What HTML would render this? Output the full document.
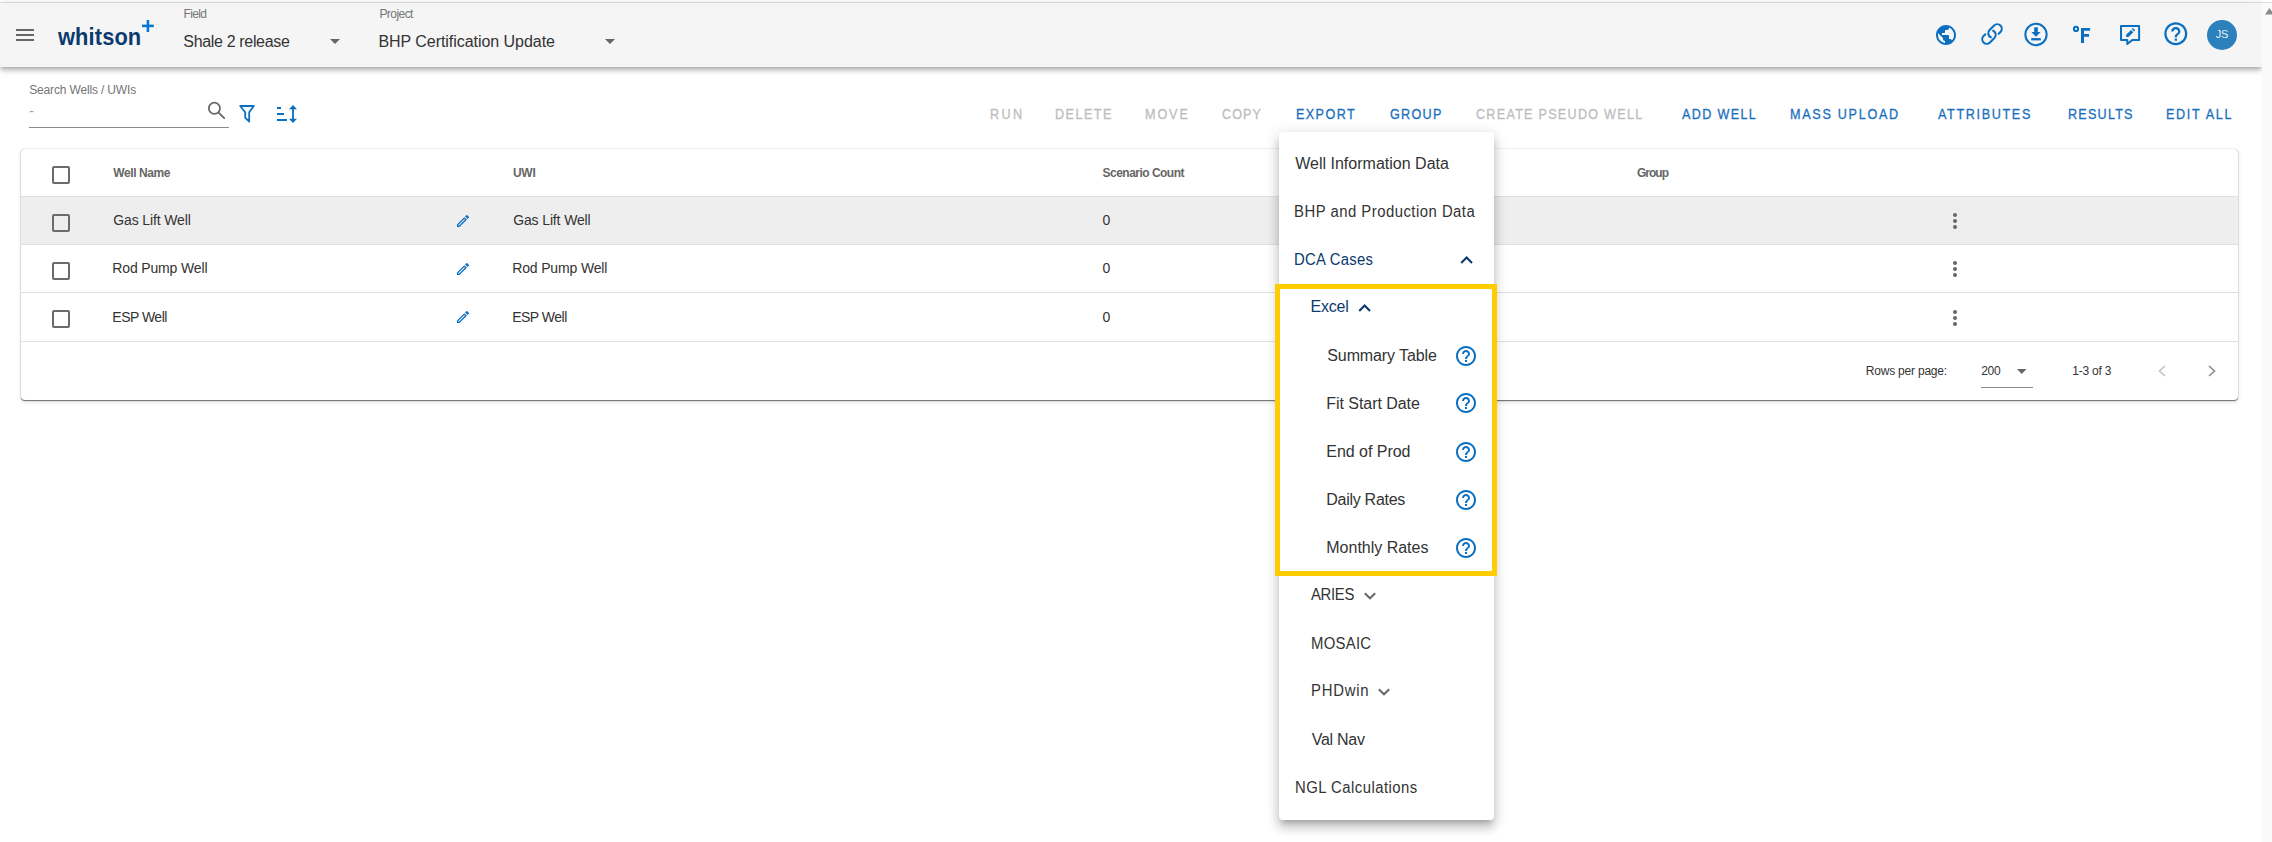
<!DOCTYPE html>
<html><head><meta charset="utf-8">
<style>
html,body{margin:0;padding:0;width:2272px;height:842px;overflow:hidden;background:#fff;font-family:"Liberation Sans", sans-serif;}
.t{position:absolute;line-height:1;white-space:nowrap;}
.a{position:absolute;}
svg{position:absolute;overflow:visible;}
</style></head><body>
<div class="a" style="left:0;top:2px;width:2272px;height:1px;background:#e2e2e2"></div>
<div class="a" style="left:0;top:3px;width:2262px;height:64px;background:#f5f5f5;box-shadow:0 2px 4px -1px rgba(0,0,0,0.2),0 4px 5px 0 rgba(0,0,0,0.14),0 1px 10px 0 rgba(0,0,0,0.12);z-index:2"></div>
<div class="a" style="left:2262px;top:3px;width:10px;height:839px;background:#fafafa;z-index:3"></div>
<svg style="left:2262px;top:0;z-index:4" width="10" height="20"><path d="M3 14.5 L7.5 8 L12 14.5 Z" fill="#8a8a8a"/></svg>
<div class="a" style="left:0;top:0;width:2262px;height:67px;z-index:5"><div class="a" style="left:16px;top:29px;width:18px;height:2px;background:#666"></div><div class="a" style="left:16px;top:34px;width:18px;height:2px;background:#666"></div><div class="a" style="left:16px;top:39px;width:18px;height:2px;background:#666"></div><div class="t" style="left:58.41px;top:25.00px;font-size:24px;color:#0b3a6e;font-weight:700;letter-spacing:0.127px;transform:scaleX(0.91);transform-origin:0 0;">whitson</div><svg style="left:142px;top:20px" width="13" height="13"><rect x="4.6" y="0" width="2.6" height="12" fill="#0a78d0"/><rect x="0" y="4.6" width="11.8" height="2.6" fill="#0a78d0"/></svg><div class="t" style="left:183.50px;top:8.00px;font-size:12px;color:#757575;font-weight:400;letter-spacing:-0.634px;">Field</div><div class="t" style="left:183.30px;top:34.00px;font-size:16px;color:#333;font-weight:400;letter-spacing:-0.335px;">Shale 2 release</div><svg style="left:330px;top:39px" width="10" height="5"><path d="M0 0 L10 0 L5 5 Z" fill="#666"/></svg><div class="t" style="left:379.40px;top:8.00px;font-size:12px;color:#757575;font-weight:400;letter-spacing:-0.552px;">Project</div><div class="t" style="left:378.40px;top:34.00px;font-size:16px;color:#333;font-weight:400;letter-spacing:-0.042px;">BHP Certification Update</div><svg style="left:605px;top:39px" width="10" height="5"><path d="M0 0 L10 0 L5 5 Z" fill="#666"/></svg></div>
<div class="a" style="left:0;top:0;width:2262px;height:67px;z-index:6"><svg style="left:1934px;top:23px" width="24" height="24" viewBox="0 0 24 24"><path fill="#0a6fc0" d="M12 2C6.48 2 2 6.48 2 12s4.48 10 10 10 10-4.48 10-10S17.52 2 12 2zm-1 17.93c-3.95-.49-7-3.85-7-7.93 0-.62.08-1.21.21-1.79L9 15v1c0 1.1.9 2 2 2v1.93zm6.9-2.54c-.26-.81-1-1.39-1.9-1.39h-1v-3c0-.55-.45-1-1-1H8v-2h2c.55 0 1-.45 1-1V7h2c1.1 0 2-.9 2-2v-.41c2.93 1.19 5 4.06 5 7.41 0 2.08-.8 3.97-2.1 5.39z"/></svg><svg style="left:1980px;top:22.2px" width="24" height="24" viewBox="0 0 24 24"><path fill="none" stroke="#0a6fc0" stroke-width="2.1" stroke-linecap="round" stroke-linejoin="round" d="M13.19 8.688a4.5 4.5 0 0 1 1.242 7.244l-4.5 4.5a4.5 4.5 0 0 1-6.364-6.364l1.757-1.757m13.35-.622 1.757-1.757a4.5 4.5 0 0 0-6.364-6.364l-4.5 4.5a4.5 4.5 0 0 0 1.242 7.244"/></svg><svg style="left:2024px;top:22.5px" width="24" height="24" viewBox="0 0 24 24"><circle cx="12" cy="11.5" r="10.65" fill="none" stroke="#0a6fc0" stroke-width="2"/><rect x="10.2" y="4.3" width="3.6" height="5.3" fill="#0a6fc0"/><path d="M7.4 9.1 H16.6 L12 13.8 Z" fill="#0a6fc0"/><rect x="7.2" y="15.1" width="9.6" height="2.3" fill="#0a6fc0"/></svg><svg style="left:0;top:0" width="2262" height="67"><circle cx="2076" cy="28.95" r="2.1" fill="none" stroke="#0a6fc0" stroke-width="2"/><path d="M2081 28 H2090.1 V30.7 H2084 V34.1 H2089 V36.8 H2084 V43 H2081 Z" fill="#0a6fc0"/><path d="M2121 25.9 H2139.1 V39.9 H2132.3 L2127.3 44 V39.9 H2121 Z" fill="none" stroke="#0a6fc0" stroke-width="2" stroke-linejoin="round"/><path d="M2126.2 37 L2126.2 34.7 L2131 29.9 L2133.3 32.2 L2128.5 37 Z" fill="#0a6fc0"/><path d="M2131.8 29.1 L2132.9 28 L2135.2 30.3 L2134.1 31.4 Z" fill="#0a6fc0"/></svg><svg style="left:2162.2px;top:20.4px" width="27.6" height="27.6" viewBox="0 0 24 24"><path fill="#0a6fc0" d="M11 18h2v-2h-2v2zm1-16C6.48 2 2 6.48 2 12s4.48 10 10 10 10-4.48 10-10S17.52 2 12 2zm0 18c-4.41 0-8-3.59-8-8s3.59-8 8-8 8 3.59 8 8-3.59 8-8 8zm0-14c-2.21 0-4 1.79-4 4h2c0-1.1.9-2 2-2s2 .9 2 2c0 2-3 1.75-3 5h2c0-2.25 3-2.5 3-5 0-2.21-1.79-4-4-4z"/></svg><div class="a" style="left:2207px;top:20px;width:30px;height:30px;border-radius:50%;background:#2c80bb"></div><div class="t" style="left:2207px;top:29px;width:30px;text-align:center;font-size:11px;color:rgba(255,255,255,0.92);letter-spacing:-0.2px">JS</div></div>
<div class="t" style="left:29.20px;top:84.00px;font-size:12px;color:#757575;font-weight:400;letter-spacing:-0.155px;">Search Wells / UWIs</div><div class="t" style="left:29.20px;top:104.00px;font-size:14px;color:#9e9e9e;font-weight:400;letter-spacing:0.000px;">-</div><div class="a" style="left:29px;top:127px;width:200px;height:1px;background:#8a8a8a"></div><svg style="left:206px;top:100px" width="22" height="22" viewBox="0 0 22 22"><circle cx="8.4" cy="8.3" r="5.6" fill="none" stroke="#666" stroke-width="1.7"/><path d="M12.6 12.6 L18.2 18.2" stroke="#666" stroke-width="1.8" stroke-linecap="round"/></svg><svg style="left:238px;top:104px" width="20" height="20" viewBox="0 0 20 20"><path d="M2.2 2 H15.8 L11.2 8.2 V17.6 L7.2 13.6 V8.2 Z" fill="none" stroke="#0a6fc0" stroke-width="1.8" stroke-linejoin="round"/></svg><div class="a" style="left:277px;top:107px;width:4px;height:2px;background:#0a6fc0"></div><div class="a" style="left:277px;top:113px;width:7px;height:2px;background:#0a6fc0"></div><div class="a" style="left:277px;top:119px;width:10px;height:2px;background:#0a6fc0"></div><svg style="left:288px;top:104px" width="10" height="20" viewBox="0 0 10 20"><path d="M0.9 5.2 L5 1 L9 5.2 H5.9 V14.8 H9 L5 19 L0.9 14.8 H4.1 V5.2 Z" fill="#0a6fc0"/></svg>
<div class="t" style="left:989.70px;top:107.00px;font-size:14px;color:#bdbdbd;font-weight:400;letter-spacing:2.612px;-webkit-text-stroke:0.3px #bdbdbd;transform:scaleX(0.9);transform-origin:0 0;">RUN</div><div class="t" style="left:1054.60px;top:107.00px;font-size:14px;color:#bdbdbd;font-weight:400;letter-spacing:1.642px;-webkit-text-stroke:0.3px #bdbdbd;transform:scaleX(0.9);transform-origin:0 0;">DELETE</div><div class="t" style="left:1144.80px;top:107.00px;font-size:14px;color:#bdbdbd;font-weight:400;letter-spacing:2.111px;-webkit-text-stroke:0.3px #bdbdbd;transform:scaleX(0.9);transform-origin:0 0;">MOVE</div><div class="t" style="left:1222.30px;top:107.00px;font-size:14px;color:#bdbdbd;font-weight:400;letter-spacing:1.221px;-webkit-text-stroke:0.3px #bdbdbd;transform:scaleX(0.9);transform-origin:0 0;">COPY</div><div class="t" style="left:1295.80px;top:107.00px;font-size:14px;color:#1a70bd;font-weight:400;letter-spacing:1.559px;-webkit-text-stroke:0.3px #1a70bd;transform:scaleX(0.9);transform-origin:0 0;">EXPORT</div><div class="t" style="left:1389.50px;top:107.00px;font-size:14px;color:#1a70bd;font-weight:400;letter-spacing:1.444px;-webkit-text-stroke:0.3px #1a70bd;transform:scaleX(0.9);transform-origin:0 0;">GROUP</div><div class="t" style="left:1475.70px;top:107.00px;font-size:14px;color:#bdbdbd;font-weight:400;letter-spacing:1.406px;-webkit-text-stroke:0.3px #bdbdbd;transform:scaleX(0.9);transform-origin:0 0;">CREATE PSEUDO WELL</div><div class="t" style="left:1681.50px;top:107.00px;font-size:14px;color:#1a70bd;font-weight:400;letter-spacing:1.491px;-webkit-text-stroke:0.3px #1a70bd;transform:scaleX(0.9);transform-origin:0 0;">ADD WELL</div><div class="t" style="left:1790.40px;top:107.00px;font-size:14px;color:#1a70bd;font-weight:400;letter-spacing:1.908px;-webkit-text-stroke:0.3px #1a70bd;transform:scaleX(0.9);transform-origin:0 0;">MASS UPLOAD</div><div class="t" style="left:1937.50px;top:107.00px;font-size:14px;color:#1a70bd;font-weight:400;letter-spacing:1.831px;-webkit-text-stroke:0.3px #1a70bd;transform:scaleX(0.9);transform-origin:0 0;">ATTRIBUTES</div><div class="t" style="left:2067.90px;top:107.00px;font-size:14px;color:#1a70bd;font-weight:400;letter-spacing:1.356px;-webkit-text-stroke:0.3px #1a70bd;transform:scaleX(0.9);transform-origin:0 0;">RESULTS</div><div class="t" style="left:2166.40px;top:107.00px;font-size:14px;color:#1a70bd;font-weight:400;letter-spacing:1.871px;-webkit-text-stroke:0.3px #1a70bd;transform:scaleX(0.9);transform-origin:0 0;">EDIT ALL</div><div class="a" style="left:21px;top:149px;width:2217px;height:251px;background:#fff;border-radius:4px;box-shadow:0 1px 1px 0 rgba(0,0,0,0.5),0 0 1px 0 rgba(0,0,0,0.4),0 2px 4px 0 rgba(0,0,0,0.12)"></div>
<div class="a" style="left:21px;top:197px;width:2217px;height:47px;background:#eeeeee"></div>
<div class="a" style="left:21px;top:196px;width:2217px;height:1px;background:#e0e0e0"></div>
<div class="a" style="left:21px;top:244px;width:2217px;height:1px;background:#e0e0e0"></div>
<div class="a" style="left:21px;top:292px;width:2217px;height:1px;background:#e0e0e0"></div>
<div class="a" style="left:21px;top:341px;width:2217px;height:1px;background:#e0e0e0"></div>
<div class="a" style="left:52px;top:166px;width:14px;height:14px;border:2px solid #6b6b6b;border-radius:2px"></div>
<div class="a" style="left:52px;top:214px;width:14px;height:14px;border:2px solid #6b6b6b;border-radius:2px"></div>
<div class="a" style="left:52px;top:262px;width:14px;height:14px;border:2px solid #6b6b6b;border-radius:2px"></div>
<div class="a" style="left:52px;top:310px;width:14px;height:14px;border:2px solid #6b6b6b;border-radius:2px"></div>
<div class="t" style="left:113.30px;top:167.00px;font-size:12px;color:#666;font-weight:700;letter-spacing:-0.412px;">Well Name</div><div class="t" style="left:513.00px;top:167.00px;font-size:12px;color:#666;font-weight:700;letter-spacing:-0.300px;">UWI</div><div class="t" style="left:1102.50px;top:167.00px;font-size:12px;color:#666;font-weight:700;letter-spacing:-0.514px;">Scenario Count</div><div class="t" style="left:1637.00px;top:167.00px;font-size:12px;color:#666;font-weight:700;letter-spacing:-0.991px;">Group</div><div class="t" style="left:113.30px;top:213.00px;font-size:14px;color:#333;font-weight:400;letter-spacing:-0.132px;">Gas Lift Well</div><div class="t" style="left:513.20px;top:213.00px;font-size:14px;color:#333;font-weight:400;letter-spacing:-0.132px;">Gas Lift Well</div><div class="t" style="left:1102.50px;top:213.00px;font-size:14px;color:#333;font-weight:400;letter-spacing:0.000px;">0</div><svg style="left:454.7px;top:212.7px" width="16" height="16" viewBox="0 0 24 24"><path fill="#0a6fc0" d="M3 17.25V21h3.75L17.81 9.94l-3.75-3.75L3 17.25zM5.92 19H5v-.92l9.06-9.06.92.92L5.92 19zM20.71 5.63l-2.34-2.34c-.2-.2-.45-.29-.71-.29s-.51.1-.7.29l-1.83 1.83 3.75 3.75 1.83-1.83c.39-.39.39-1.02 0-1.41z"/></svg>
<svg style="left:1943.4px;top:208.9px" width="24" height="24" viewBox="0 0 24 24"><circle cx="12" cy="6" r="2" fill="#666"/><circle cx="12" cy="12" r="2" fill="#666"/><circle cx="12" cy="18" r="2" fill="#666"/></svg>
<div class="t" style="left:112.30px;top:261.00px;font-size:14px;color:#333;font-weight:400;letter-spacing:-0.149px;">Rod Pump Well</div><div class="t" style="left:512.20px;top:261.00px;font-size:14px;color:#333;font-weight:400;letter-spacing:-0.149px;">Rod Pump Well</div><div class="t" style="left:1102.50px;top:261.00px;font-size:14px;color:#333;font-weight:400;letter-spacing:0.000px;">0</div><svg style="left:454.7px;top:260.6px" width="16" height="16" viewBox="0 0 24 24"><path fill="#0a6fc0" d="M3 17.25V21h3.75L17.81 9.94l-3.75-3.75L3 17.25zM5.92 19H5v-.92l9.06-9.06.92.92L5.92 19zM20.71 5.63l-2.34-2.34c-.2-.2-.45-.29-.71-.29s-.51.1-.7.29l-1.83 1.83 3.75 3.75 1.83-1.83c.39-.39.39-1.02 0-1.41z"/></svg>
<svg style="left:1943.4px;top:256.8px" width="24" height="24" viewBox="0 0 24 24"><circle cx="12" cy="6" r="2" fill="#666"/><circle cx="12" cy="12" r="2" fill="#666"/><circle cx="12" cy="18" r="2" fill="#666"/></svg>
<div class="t" style="left:112.30px;top:310.00px;font-size:14px;color:#333;font-weight:400;letter-spacing:-0.509px;">ESP Well</div><div class="t" style="left:512.20px;top:310.00px;font-size:14px;color:#333;font-weight:400;letter-spacing:-0.509px;">ESP Well</div><div class="t" style="left:1102.50px;top:310.00px;font-size:14px;color:#333;font-weight:400;letter-spacing:0.000px;">0</div><svg style="left:454.7px;top:309.4px" width="16" height="16" viewBox="0 0 24 24"><path fill="#0a6fc0" d="M3 17.25V21h3.75L17.81 9.94l-3.75-3.75L3 17.25zM5.92 19H5v-.92l9.06-9.06.92.92L5.92 19zM20.71 5.63l-2.34-2.34c-.2-.2-.45-.29-.71-.29s-.51.1-.7.29l-1.83 1.83 3.75 3.75 1.83-1.83c.39-.39.39-1.02 0-1.41z"/></svg>
<svg style="left:1943.4px;top:305.6px" width="24" height="24" viewBox="0 0 24 24"><circle cx="12" cy="6" r="2" fill="#666"/><circle cx="12" cy="12" r="2" fill="#666"/><circle cx="12" cy="18" r="2" fill="#666"/></svg>
<div class="t" style="left:1865.80px;top:365.00px;font-size:12px;color:#333;font-weight:400;letter-spacing:-0.209px;">Rows per page:</div><div class="t" style="left:1981.20px;top:365.00px;font-size:12px;color:#333;font-weight:400;letter-spacing:-0.274px;">200</div><svg style="left:2017px;top:369px" width="10" height="5"><path d="M0 0 L9.5 0 L4.75 5 Z" fill="#666"/></svg>
<div class="a" style="left:1981px;top:387px;width:52px;height:1px;background:#8a8a8a"></div>
<div class="t" style="left:2072.20px;top:365.00px;font-size:12px;color:#333;font-weight:400;letter-spacing:-0.203px;">1-3 of 3</div><svg style="left:2157px;top:365px" width="10" height="12"><path d="M8 1 L2.5 6 L8 11" fill="none" stroke="#c4c4c4" stroke-width="1.6"/></svg>
<svg style="left:2207px;top:365px" width="10" height="12"><path d="M2 1 L7.5 6 L2 11" fill="none" stroke="#8a8a8a" stroke-width="1.6"/></svg>
<div class="a" style="left:0;top:0;width:2272px;height:842px;z-index:10"><div class="a" style="left:1279px;top:132px;width:215px;height:688px;background:#fff;border-radius:4px;box-shadow:0 5px 5px -3px rgba(0,0,0,0.2),0 8px 10px 1px rgba(0,0,0,0.14),0 3px 14px 2px rgba(0,0,0,0.12)"></div><div class="t" style="left:1295.20px;top:156.00px;font-size:16px;color:#333;font-weight:400;letter-spacing:0.008px;">Well Information Data</div><div class="t" style="left:1294.47px;top:204.00px;font-size:16px;color:#333;font-weight:400;letter-spacing:0.520px;transform:scaleX(0.93);transform-origin:0 0;">BHP and Production Data</div><div class="t" style="left:1294.47px;top:252.00px;font-size:16px;color:#0b3a6e;font-weight:400;letter-spacing:0.269px;transform:scaleX(0.93);transform-origin:0 0;">DCA Cases</div><div class="t" style="left:1310.50px;top:299.00px;font-size:16px;color:#0b3a6e;font-weight:400;letter-spacing:-0.218px;">Excel</div><div class="t" style="left:1327.30px;top:348.00px;font-size:16px;color:#333;font-weight:400;letter-spacing:-0.112px;">Summary Table</div><div class="t" style="left:1326.30px;top:396.00px;font-size:16px;color:#333;font-weight:400;letter-spacing:-0.050px;">Fit Start Date</div><div class="t" style="left:1326.30px;top:444.00px;font-size:16px;color:#333;font-weight:400;letter-spacing:-0.030px;">End of Prod</div><div class="t" style="left:1326.30px;top:492.00px;font-size:16px;color:#333;font-weight:400;letter-spacing:-0.280px;">Daily Rates</div><div class="t" style="left:1326.30px;top:540.00px;font-size:16px;color:#333;font-weight:400;letter-spacing:-0.014px;">Monthly Rates</div><div class="t" style="left:1311.40px;top:587.00px;font-size:16px;color:#333;font-weight:400;letter-spacing:-0.357px;transform:scaleX(0.93);transform-origin:0 0;">ARIES</div><div class="t" style="left:1310.77px;top:636.00px;font-size:16px;color:#333;font-weight:400;letter-spacing:0.290px;transform:scaleX(0.93);transform-origin:0 0;">MOSAIC</div><div class="t" style="left:1310.77px;top:683.00px;font-size:16px;color:#333;font-weight:400;letter-spacing:0.800px;transform:scaleX(0.93);transform-origin:0 0;">PHDwin</div><div class="t" style="left:1311.70px;top:732.00px;font-size:16px;color:#333;font-weight:400;letter-spacing:-0.256px;">Val Nav</div><div class="t" style="left:1294.77px;top:780.00px;font-size:16px;color:#333;font-weight:400;letter-spacing:0.505px;transform:scaleX(0.93);transform-origin:0 0;">NGL Calculations</div><svg style="left:1459.6px;top:255px" width="14" height="10"><path d="M1.2 8 L6.6 2.6 L12 8" fill="none" stroke="#0b3a6e" stroke-width="2.1"/></svg><svg style="left:1358px;top:302.8px" width="14" height="10"><path d="M1.2 8 L6.6 2.6 L12 8" fill="none" stroke="#0b3a6e" stroke-width="2.1"/></svg><svg style="left:1363.4px;top:591.4px" width="14" height="10"><path d="M1.8 2.2 L7 7.3 L12.2 2.2" fill="none" stroke="#666" stroke-width="1.9"/></svg><svg style="left:1377px;top:687.4px" width="14" height="10"><path d="M1.8 2.2 L7 7.3 L12.2 2.2" fill="none" stroke="#666" stroke-width="1.9"/></svg><svg style="left:1454px;top:343.6px" width="24" height="24" viewBox="0 0 24 24"><path fill="#0a6fc0" d="M11 18h2v-2h-2v2zm1-16C6.48 2 2 6.48 2 12s4.48 10 10 10 10-4.48 10-10S17.52 2 12 2zm0 18c-4.41 0-8-3.59-8-8s3.59-8 8-8 8 3.59 8 8-3.59 8-8 8zm0-14c-2.21 0-4 1.79-4 4h2c0-1.1.9-2 2-2s2 .9 2 2c0 2-3 1.75-3 5h2c0-2.25 3-2.5 3-5 0-2.21-1.79-4-4-4z"/></svg><svg style="left:1454px;top:391.4px" width="24" height="24" viewBox="0 0 24 24"><path fill="#0a6fc0" d="M11 18h2v-2h-2v2zm1-16C6.48 2 2 6.48 2 12s4.48 10 10 10 10-4.48 10-10S17.52 2 12 2zm0 18c-4.41 0-8-3.59-8-8s3.59-8 8-8 8 3.59 8 8-3.59 8-8 8zm0-14c-2.21 0-4 1.79-4 4h2c0-1.1.9-2 2-2s2 .9 2 2c0 2-3 1.75-3 5h2c0-2.25 3-2.5 3-5 0-2.21-1.79-4-4-4z"/></svg><svg style="left:1454px;top:439.8px" width="24" height="24" viewBox="0 0 24 24"><path fill="#0a6fc0" d="M11 18h2v-2h-2v2zm1-16C6.48 2 2 6.48 2 12s4.48 10 10 10 10-4.48 10-10S17.52 2 12 2zm0 18c-4.41 0-8-3.59-8-8s3.59-8 8-8 8 3.59 8 8-3.59 8-8 8zm0-14c-2.21 0-4 1.79-4 4h2c0-1.1.9-2 2-2s2 .9 2 2c0 2-3 1.75-3 5h2c0-2.25 3-2.5 3-5 0-2.21-1.79-4-4-4z"/></svg><svg style="left:1454px;top:487.8px" width="24" height="24" viewBox="0 0 24 24"><path fill="#0a6fc0" d="M11 18h2v-2h-2v2zm1-16C6.48 2 2 6.48 2 12s4.48 10 10 10 10-4.48 10-10S17.52 2 12 2zm0 18c-4.41 0-8-3.59-8-8s3.59-8 8-8 8 3.59 8 8-3.59 8-8 8zm0-14c-2.21 0-4 1.79-4 4h2c0-1.1.9-2 2-2s2 .9 2 2c0 2-3 1.75-3 5h2c0-2.25 3-2.5 3-5 0-2.21-1.79-4-4-4z"/></svg><svg style="left:1454px;top:535.5px" width="24" height="24" viewBox="0 0 24 24"><path fill="#0a6fc0" d="M11 18h2v-2h-2v2zm1-16C6.48 2 2 6.48 2 12s4.48 10 10 10 10-4.48 10-10S17.52 2 12 2zm0 18c-4.41 0-8-3.59-8-8s3.59-8 8-8 8 3.59 8 8-3.59 8-8 8zm0-14c-2.21 0-4 1.79-4 4h2c0-1.1.9-2 2-2s2 .9 2 2c0 2-3 1.75-3 5h2c0-2.25 3-2.5 3-5 0-2.21-1.79-4-4-4z"/></svg><div class="a" style="left:1275px;top:284px;width:212px;height:282px;border:5px solid #ffcc00;z-index:12"></div></div>
</body></html>
